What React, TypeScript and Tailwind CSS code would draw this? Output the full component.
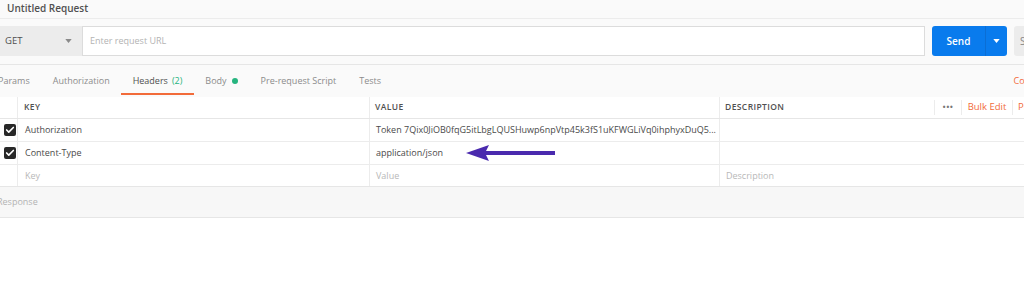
import { Check } from "lucide-react";

const tabs = [
  { label: "Params" },
  { label: "Authorization" },
  { label: "Headers", count: "(2)", active: true },
  { label: "Body", dot: true },
  { label: "Pre-request Script" },
  { label: "Tests" },
];

const rows = [
  {
    key: "Authorization",
    value: "Token 7Qix0JiOB0fqG5itLbgLQUSHuwp6npVtp45k3fS1uKFWGLiVq0ihphyxDuQ5...",
    checked: true,
  },
  { key: "Content-Type", value: "application/json", checked: true },
];

function Caret({ className }: { className: string }) {
  return (
    <svg width="7" height="4" viewBox="0 0 8 5" className={className}>
      <path d="M0 0h8L4 5z" fill="currentColor" />
    </svg>
  );
}

function Box() {
  return (
    <span className="flex h-[12px] w-[12px] items-center justify-center rounded-[2px] bg-[#282828]">
      <Check className="h-[10px] w-[10px] text-white" strokeWidth={4} />
    </span>
  );
}

export default function App() {
  return (
    <div
      className="relative h-[282px] w-[1024px] overflow-hidden bg-white text-[9px] text-[#4a4a4a]"
      style={{ fontFamily: '"Open Sans", sans-serif' }}
    >
      <div className="w-[1100px]">
        {/* title */}
        <div className="flex h-[19px] items-center border-b border-[#ececec] bg-[#fafafa] pl-[7px] pb-[2px]">
          <span className="font-semibold text-[10px] text-[#505050]">Untitled Request</span>
        </div>

        {/* url bar */}
        <div className="flex h-[46px] items-start gap-[7px] border-b border-[#e6e6e6] bg-[#fafafa] pt-[7px]">
          <div className="flex">
            <div className="flex h-[30px] w-[82px] items-center justify-between bg-[#ececec] pl-[5px] pr-[10px]">
              <span className="text-[9.5px] text-[#505050]">GET</span>
              <Caret className="text-[#8a8a8a]" />
            </div>
            <div className="flex h-[30px] w-[843px] items-center border border-[#dcdcdc] bg-white pl-[7px]">
              <span className="text-[#b3b3b3]">Enter request URL</span>
            </div>
          </div>
          <div className="flex h-[30px] w-[75px] overflow-hidden rounded-[3px] bg-[#097bed] text-white">
            <div className="flex w-[53px] items-center justify-center text-[10px] font-semibold">Send</div>
            <div className="flex flex-1 items-center justify-center border-l border-[#0b6ed4]">
              <Caret className="text-white" />
            </div>
          </div>
          <div className="flex h-[30px] w-[70px] items-center rounded-[3px] bg-[#ececec] pl-[6px] text-[10px] text-[#888]">
            Save
          </div>
        </div>

        {/* tabs */}
        <div className="flex h-[32px] items-stretch bg-[#fafafa] whitespace-nowrap">
          {tabs.map((t, i) => (
            <div
              key={t.label}
              className={`relative flex items-center px-[11.5px] ${i === 0 ? "-ml-[13.5px]" : ""} ${
                t.active ? "text-[#505050]" : "text-[#8c8c8c]"
              }`}
            >
              <span>{t.label}</span>
              {t.count && <span className="ml-[4px] text-[#26b47f]">{t.count}</span>}
              {t.dot && <span className="ml-[5px] h-[6px] w-[6px] rounded-full bg-[#26b47f]" />}
              {t.active && <span className="absolute bottom-[2px] left-0 right-0 h-[2px] bg-[#f26b3a]" />}
            </div>
          ))}
          <div className="flex-1" />
          <div className="flex items-center pr-[20px] text-[#f26b3a]">
            <span>Cookies</span>
            <span className="ml-[12px]">Code</span>
          </div>
        </div>

        {/* header row */}
        <div className="flex h-[22px] border-b border-[#e6e6e6] bg-white text-[8.5px] font-semibold uppercase tracking-[0.4px] text-[#505050] whitespace-nowrap">
          <div className="w-[18px] border-r border-[#ececec]" />
          <div className="flex w-[352px] items-center border-r border-[#ececec] pl-[6px]">Key</div>
          <div className="flex w-[350px] items-center border-r border-[#ececec] pl-[5px]">Value</div>
          <div className="flex w-[214px] items-center pl-[5px]">Description</div>
          <div className="my-[3px] flex w-[28px] items-center justify-center border-x border-[#ececec] text-[#777] tracking-[0.5px]">
            •••
          </div>
          <div className="my-[3px] flex w-[51px] items-center justify-center border-r border-[#ececec] text-[9.5px] font-normal normal-case tracking-normal text-[#f26b3a]">
            Bulk Edit
          </div>
          <div className="flex items-center pl-[5px] text-[9.5px] font-normal normal-case tracking-normal text-[#f26b3a]">
            Presets
          </div>
        </div>

        {/* rows */}
        {rows.map((r) => (
          <div key={r.key} className="flex h-[23px] border-b border-[#ececec] bg-white whitespace-nowrap">
            <div className="flex w-[18px] items-center justify-center border-r border-[#ececec] pl-[2px]">
              {r.checked && <Box />}
            </div>
            <div className="flex w-[352px] items-center border-r border-[#ececec] pl-[7px]">{r.key}</div>
            <div className="flex w-[350px] items-center border-r border-[#ececec] pl-[6px]">{r.value}</div>
            <div className="flex-1" />
          </div>
        ))}
        <div className="flex h-[22px] border-b border-[#e6e6e6] bg-white text-[#b8b8b8]">
          <div className="w-[18px] border-r border-[#ececec]" />
          <div className="flex w-[352px] items-center border-r border-[#ececec] pl-[7px]">Key</div>
          <div className="flex w-[350px] items-center border-r border-[#ececec] pl-[6px]">Value</div>
          <div className="flex flex-1 items-center pl-[6px]">Description</div>
        </div>

        {/* response */}
        <div className="flex h-[31px] items-center border-b border-[#e6e6e6] bg-[#f7f7f7]">
          <span className="-ml-[3px] text-[#b3b3b3]">Response</span>
        </div>
      </div>

      {/* annotation arrow */}
      <svg className="pointer-events-none absolute left-[464px] top-[144px]" width="96" height="18" viewBox="0 0 96 18">
        <path d="M2 9 L25 1 L22 7 L91 7 L91 11 L22 11 L25 17 Z" fill="#4a2aae" />
      </svg>
    </div>
  );
}
